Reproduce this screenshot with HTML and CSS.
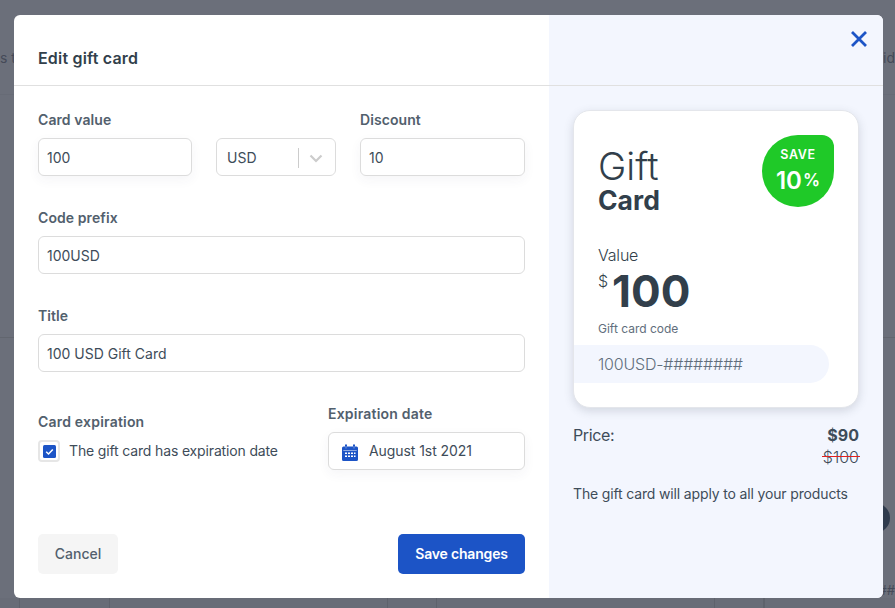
FILE: index.html
```html
<!DOCTYPE html>
<html lang="en">
<head>
<meta charset="utf-8">
<title>Edit gift card</title>
<link rel="stylesheet" href="styles.css">
</head>
<body>
<div class="page">
  <div class="page-top"><span>s t</span><span>id</span></div>
  <div class="page-main"></div>
  <div class="page-row">
    <span class="page-dot"></span>
    <span class="page-hash">##</span>
  </div>
  <div class="page-cells"><i></i><i></i><i></i><i></i><i></i><i></i><i></i></div>
</div>
<div class="modal">
  <section class="editor">
    <header class="editor-head"><h1>Edit gift card</h1></header>
    <form class="form">
      <div class="row row-value">
        <div class="field">
          <label>Card value</label>
          <div class="input input-shadow">100</div>
        </div>
        <div class="field">
          <label>&nbsp;</label>
          <div class="input select"><span class="select-value">USD</span><span class="select-sep"></span>
            <svg class="chev" width="14" height="14" viewBox="0 0 14 14"><path d="M1.500 4.500l5.500 5.500 5.500-5.500" fill="none" stroke="#cccccc" stroke-width="2.200"/></svg>
          </div>
        </div>
        <div class="field">
          <label>Discount</label>
          <div class="input input-shadow">10</div>
        </div>
      </div>
      <div class="field">
        <label>Code prefix</label>
        <div class="input">100USD</div>
      </div>
      <div class="field">
        <label>Title</label>
        <div class="input">100 USD Gift Card</div>
      </div>
      <div class="row row-exp">
        <div class="exp-left">
          <label class="wide">Card expiration</label>
          <div class="check-row">
            <span class="check"><svg width="13" height="13" viewBox="0 0 13 13"><rect width="13" height="13" rx="1.500" fill="#1c54c6"/><path d="M3.200 6.800l2.300 2.200 4.300-4.600" fill="none" stroke="#fff" stroke-width="1.500"/></svg></span>
            <span>The gift card has expiration date</span>
          </div>
        </div>
        <div class="field exp-right">
          <label class="wide">Expiration date</label>
          <div class="input input-shadow date">
            <svg width="16" height="17" viewBox="0 0 16 17"><path fill="#1c54c6" d="M1.500 2.500H3V1.200a1 1 0 0 1 2 0v1.300h6V1.200a1 1 0 0 1 2 0v1.300h1.500A1.500 1.500 0 0 1 16 4v11.500a1.500 1.500 0 0 1-1.500 1.500h-13A1.500 1.500 0 0 1 0 15.500V4a1.500 1.500 0 0 1 1.500-1.500z"/><path fill="#fff" d="M1.300 6.500h13.400v.6H1.300zM3.800 2h.4v2.600h-.4zM11.800 2h.4v2.600h-.4z"/><path fill="#fff" d="M3 8.500h2v1.500H3zM6 8.500h2v1.500H6zM9 8.500h2v1.500H9zM12 8.500h1.500v1.500H12zM3 11.500h2V13H3zM6 11.500h2V13H6zM9 11.500h2V13H9zM12 11.500h1.500V13H12z"/></svg>
            <span>August 1st 2021</span>
          </div>
        </div>
      </div>
      <div class="actions">
        <button type="button" class="btn btn-cancel">Cancel</button>
        <button type="button" class="btn btn-save">Save changes</button>
      </div>
    </form>
  </section>
  <aside class="preview">
    <div class="preview-head">
      <svg class="close" width="16" height="16" viewBox="0 0 16 16"><path d="M1 1l14 14M15 1L1 15" fill="none" stroke="#1c54c6" stroke-width="2.800"/></svg>
    </div>
    <div class="preview-body">
      <div class="card">
        <div class="card-top">
          <div class="card-name"><div class="gift">Gift</div><div class="card-word">Card</div></div>
          <div class="badge"><span class="save">SAVE</span><span class="pct">10<small>%</small></span></div>
        </div>
        <div class="value-label">Value</div>
        <div class="amount"><span class="cur">$</span><span class="num">100</span></div>
        <div class="code-label">Gift card code</div>
        <div class="code">100USD-########</div>
      </div>
      <div class="price">
        <span class="price-label">Price:</span>
        <div class="price-vals"><strong>$90</strong><span class="old">$100</span></div>
      </div>
      <p class="note">The gift card will apply to all your products</p>
    </div>
  </aside>
</div>
</body>
</html>
```

FILE: styles.css
```css
* { box-sizing: border-box; }
html, body { margin: 0; height: 100%; overflow: hidden; }
body { font-family: Inter, "Liberation Sans", sans-serif; background: #6b6f7a; color: #3e4c59; }

.page { height: 608px; display: flex; flex-direction: column; overflow: hidden; }
.page-top { height: 95px; padding-top: 49px; display: flex; justify-content: space-between; font-size: 14px; line-height: 18px; color: #454a58; border-bottom: 1px solid #676b76; }
.page-main { height: 243px; border-bottom: 1px solid #62666f; }
.page-row { flex: 1; position: relative; }
.page-dot { position: absolute; right: 5px; top: 165px; width: 30px; height: 30px; border-radius: 50%; background: #2f3b4d; }
.page-hash { position: absolute; right: 0; bottom: 0; font-size: 13px; line-height: 16px; color: #454a58; }
.page-cells { height: 10px; flex: none; display: flex; background: #686c77; }
.page-cells i { border-right: 1px solid #5e626c; }
.page-cells i:nth-child(1) { width: 20px; }
.page-cells i:nth-child(2) { width: 90px; }
.page-cells i:nth-child(3) { width: 278px; }
.page-cells i:nth-child(4) { width: 49px; }
.page-cells i:nth-child(5) { width: 278px; }
.page-cells i:nth-child(6) { width: 49px; }

.modal { position: absolute; left: 14px; top: 15px; width: 869px; height: 583px; display: flex; background: #fff; border-radius: 6px; overflow: hidden; }

.editor { width: 535px; display: flex; flex-direction: column; }
.editor-head { height: 71px; border-bottom: 1px solid #e0e0e0; padding: 34px 24px 0; }
.editor-head h1 { margin: 0; font-size: 16px; line-height: 19px; font-weight: 600; letter-spacing: .18px; color: #323f4b; }

.form { flex: 1; display: flex; flex-direction: column; gap: 32px; padding: 24px; }
.row { display: flex; }
.row-value { gap: 24px; }
.row-value .field:nth-child(1) { width: 154px; }
.row-value .field:nth-child(2) { width: 120px; }
.row-value .field:nth-child(3) { width: 165px; }
.row-exp { justify-content: space-between; align-items: center; }
.exp-right { width: 197px; }

label { display: block; font-size: 14px; line-height: 20px; font-weight: 600; color: #52606d; margin-bottom: 8px; letter-spacing: .08px; }
label.wide { letter-spacing: .2px; }

.input { height: 38px; border: 1px solid #dcdcdc; border-radius: 6px; background: #fff; font-size: 14px; line-height: 20px; padding: 1px 8px 0; color: #3e4c59; display: flex; align-items: center; }
.input-shadow { box-shadow: 0 4px 12px rgba(50, 60, 90, .05); }

.select { padding: 1px 10px 0; }
.select-value { flex: 1; }
.select-sep { width: 1px; height: 20px; background: #cccccc; margin-right: 10px; }
.chev { margin-right: 2px; }

.check-row { display: flex; align-items: center; gap: 9px; font-size: 14px; line-height: 22px; letter-spacing: -.15px; color: #3e4c59; }
.check { width: 22px; height: 22px; border: 2px solid #e6e6e6; border-radius: 4px; display: flex; align-items: center; justify-content: center; }
.check svg { display: block; }

.date { padding: 0 12px 0 13px; gap: 11px; }
.date span { letter-spacing: -.07px; }
.date svg { flex: none; margin-top: 3px; }

.actions { margin-top: auto; display: flex; justify-content: space-between; }
.btn { height: 40px; border: 0; border-radius: 5px; padding: 0 0 2px; font: 600 14px Inter, "Liberation Sans", sans-serif; }
.btn-cancel { width: 80px; background: #f5f5f5; color: #52606d; font-weight: 500; }
.btn-save { width: 127px; background: #1c54c6; color: #fff; letter-spacing: -.18px; }

.preview { width: 334px; background: #f3f6fe; display: flex; flex-direction: column; }
.preview-head { height: 71px; border-bottom: 1px solid #e0e0e0; display: flex; justify-content: flex-end; padding: 16px 16px 0 0; }
.close { display: block; }
.preview-body { padding: 24px 24px 0; }

.card { background: #fff; border: 1px solid #e4e6eb; border-radius: 17px; height: 298px; padding: 24px 24px 0; box-shadow: 0 3px 10px rgba(60, 70, 90, .18); }
.card-top { display: flex; justify-content: space-between; height: 110px; }
.card-name { color: #323f4b; padding-top: 10px; }
.gift { font-size: 38px; line-height: 42px; font-weight: 300; }
.card-word { font-size: 26.500px; line-height: 26px; font-weight: 700; }
.badge { width: 72px; height: 72px; background: #1fc928; border-radius: 50% 12px 50% 50%; color: #fff; display: flex; flex-direction: column; align-items: center; text-align: center; padding-top: 12px; }
.save { font-size: 12.500px; line-height: 16px; font-weight: 600; letter-spacing: .7px; }
.pct { font-size: 24px; line-height: 30px; font-weight: 600; margin-top: 2px; }
.pct small { font-size: 17px; vertical-align: 3px; margin-left: 1px; }

.value-label { font-size: 16px; line-height: 20px; font-weight: 300; letter-spacing: -.2px; color: #323f4b; }
.amount { display: flex; align-items: flex-start; height: 48px; margin-top: 2px; color: #323f4b; }
.cur { font-size: 16px; line-height: 20px; font-weight: 300; margin: 4px 4px 0 0; }
.num { font-size: 44px; line-height: 48px; font-weight: 700; }
.code-label { font-size: 12px; line-height: 16px; margin-top: 6px; color: #616e7c; }
.code { margin: 8px 5px 0 -24px; height: 38px; padding-left: 24px; line-height: 38px; font-size: 16px; font-weight: 300; letter-spacing: -.2px; color: #616e7c; background: #f3f6fe; border-radius: 0 19px 19px 0; }

.price { display: flex; justify-content: space-between; margin-top: 17px; font-size: 16px; line-height: 20px; color: #3e4c59; }
.price-label { letter-spacing: -.35px; }
.price-vals { display: flex; flex-direction: column; align-items: flex-end; gap: 2px; }
.price-vals strong { font-weight: 700; }
.old { position: relative; font-weight: 300; }
.old::after { content: ""; position: absolute; left: -1px; right: -1px; top: 9px; height: 1px; background: #e02020; }
.note { margin: 17px 0 0; font-size: 14px; line-height: 20px; letter-spacing: -.15px; color: #3e4c59; }
```
